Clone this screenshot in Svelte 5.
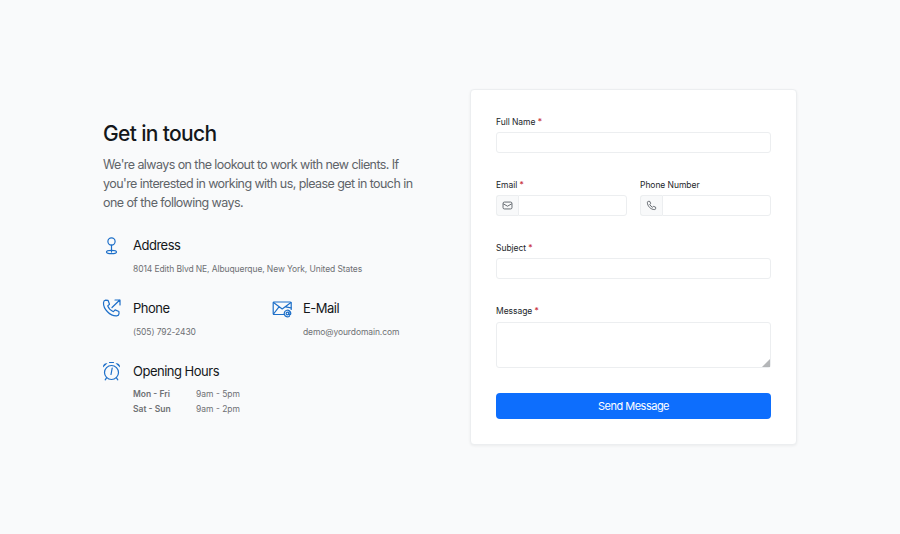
<script>
  const hours = [
    { day: 'Mon - Fri', time: '9am - 5pm' },
    { day: 'Sat - Sun', time: '9am - 2pm' }
  ];
</script>

<div class="page">
  <section class="intro">
    <h1>Get in touch</h1>
    <p class="lead">We're always on the lookout to work with new clients. If you're interested in working with us, please get in touch in one of the following ways.</p>

    <div class="info">
      <div class="item wide">
        <svg class="icon" viewBox="0 0 20 20" aria-hidden="true">
          <circle cx="9.500" cy="6.500" r="3.600" />
          <path d="M9.500 10.100v7" />
          <ellipse cx="9.500" cy="17" rx="5" ry="1.700" />
        </svg>
        <div>
          <h2>Address</h2>
          <p class="detail">8014 Edith Blvd NE, Albuquerque, New York, United States</p>
        </div>
      </div>

      <div class="item">
        <svg class="icon" viewBox="0 0 20 20" aria-hidden="true">
          <path d="M3.600 2.200 6 2.300 7.500 6.200 5.700 7.900c.9 2.500 2.900 4.700 5.700 5.800l1.700-1.800 3.800 1.600.1 2.300c-.1 1.300-1 2-2.300 2.100C8 18.300 1.200 10.900 1.500 4.700c.1-1.400 1-2.300 2.100-2.500Z" />
          <path d="M10 9.500 17.800 2M13 2h5v5" />
        </svg>
        <div>
          <h2>Phone</h2>
          <p class="detail">(505) 792-2430</p>
        </div>
      </div>

      <div class="item">
        <svg class="icon" viewBox="0 0 20 20" aria-hidden="true">
          <path d="M12 16.500H2.200a1 1 0 0 1-1-1V5a1 1 0 0 1 1-1h16a1 1 0 0 1 1 1v6.500" />
          <path d="M1.500 4.500 10.200 11 19 4.500M1.500 16 7 8.800M19 9.800 13.500 8.800" />
          <circle cx="15.500" cy="15.500" r="1.400" />
          <path d="M16.900 14v2.200c0 1 1.900 1 1.900-.7a3.300 3.300 0 1 0-1.400 2.700" />
        </svg>
        <div>
          <h2>E-Mail</h2>
          <p class="detail">demo@yourdomain.com</p>
        </div>
      </div>

      <div class="item wide">
        <svg class="icon" viewBox="0 0 20 20" aria-hidden="true">
          <circle cx="9.500" cy="11.500" r="7" />
          <path d="M10.200 7 9 13.500" />
          <path d="M4.500 16.800 3.200 18.800M14.500 16.800 15.800 18.800M7.500 1.500h4" />
          <path class="solid" d="M1 6.500C.6 3.800 2.700 1.800 5.500 2.300ZM18 6.500C18.400 3.800 16.300 1.800 13.500 2.300Z" />
        </svg>
        <div>
          <h2>Opening Hours</h2>
          <div class="hours">
            {#each hours as row}
              <div class="row"><strong>{row.day}</strong><span>{row.time}</span></div>
            {/each}
          </div>
        </div>
      </div>
    </div>
  </section>

  <form class="card">
    <div class="field">
      <label for="name">Full Name <em>*</em></label>
      <input id="name" type="text" />
    </div>

    <div class="split">
      <div class="field">
        <label for="email">Email <em>*</em></label>
        <div class="group">
          <span class="addon">
            <svg viewBox="0 0 16 16" aria-hidden="true">
              <rect x="1.500" y="3" width="13" height="10" rx="2" />
              <path d="M1.800 5.500 8 9l6.200-3.500" />
            </svg>
          </span>
          <input id="email" type="text" />
        </div>
      </div>
      <div class="field">
        <label for="phone">Phone Number</label>
        <div class="group">
          <span class="addon">
            <svg viewBox="0 0 16 16" aria-hidden="true">
              <path d="M3.500 2 5.500 2 6.800 5 5.400 6.300c.7 1.900 2.300 3.500 4.200 4.300l1.400-1.400 3 1.300v2c0 .8-.6 1.400-1.500 1.400C7 14 2 9 2 3.500 2 2.600 2.700 2 3.500 2Z" />
            </svg>
          </span>
          <input id="phone" type="text" />
        </div>
      </div>
    </div>

    <div class="field">
      <label for="subject">Subject <em>*</em></label>
      <input id="subject" type="text" />
    </div>

    <div class="field message">
      <label for="message">Message <em>*</em></label>
      <div class="area">
        <textarea id="message"></textarea>
        <svg class="grip" viewBox="0 0 8 8" aria-hidden="true">
          <path d="M8 0V8H0Z" />
        </svg>
      </div>
    </div>

    <button type="button">Send Message</button>
  </form>
</div>

<style>
  :global(body) {
    margin: 0;
    background: #f9fafb;
  }

  .page {
    box-sizing: border-box;
    height: 534px;
    padding: 0 103px;
    display: flex;
    align-items: center;
    justify-content: space-between;
    font-family: Inter, "Liberation Sans", sans-serif;
    color: #111418;
  }

  .intro {
    width: 327px;
    margin-bottom: 14px;
  }

  h1 {
    margin: 0;
    font-size: 21px;
    line-height: 26px;
    font-weight: 500;
    letter-spacing: -0.65px;
    color: #14171a;
  }

  .lead {
    margin: 8px 0 0;
    font-size: 12.500px;
    line-height: 19px;
    letter-spacing: -0.57px;
    color: #606469;
    width: 320px;
  }

  .info {
    margin-top: 24px;
    display: grid;
    grid-template-columns: 170px 1fr;
    row-gap: 25px;
  }

  .item {
    display: flex;
    gap: 11px;
    align-items: flex-start;
    height: 38px;
    margin-left: -1px;
  }

  .item.wide {
    grid-column: 1 / -1;
  }

  .icon {
    width: 20px;
    height: 20px;
    flex: none;
    fill: none;
    stroke: #1d6fc9;
    stroke-width: 1.200;
    stroke-linejoin: round;
    stroke-linecap: round;
    margin-top: -1px;
  }

  .icon .solid {
    fill: #1d6fc9;
    stroke: none;
  }

  h2 {
    margin: 0;
    font-size: 13px;
    line-height: 18px;
    font-weight: 400;
    letter-spacing: -0.5px;
    color: #14171a;
  }

  .detail {
    margin: 7px 0 0;
    font-size: 8.500px;
    line-height: 16px;
    letter-spacing: -0.1px;
    color: #6e7074;
    white-space: nowrap;
  }

  .hours {
    margin-top: 7px;
    font-size: 8.500px;
    line-height: 15px;
    color: #6e7074;
  }

  .row {
    display: flex;
  }

  .row strong {
    width: 63px;
    font-weight: 600;
  }

  .card {
    box-sizing: border-box;
    width: 327px;
    height: 356px;
    padding: 25px;
    background: #fff;
    border: 1px solid #eceef0;
    border-radius: 4px;
    box-shadow: 0 1px 3px rgba(0, 0, 0, 0.06);
    flex: none;
  }

  .field {
    height: 63px;
    min-width: 0;
  }

  .field.message {
    height: 89px;
  }

  .split {
    display: grid;
    grid-template-columns: 131px 131px;
    gap: 13px;
  }

  label {
    display: block;
    font-size: 8.500px;
    line-height: 14px;
    height: 17px;
    letter-spacing: -0.05px;
    color: #22262a;
  }

  label em {
    color: #c8323c;
    font-style: normal;
  }

  input,
  textarea {
    box-sizing: border-box;
    display: block;
    width: 100%;
    height: 21px;
    margin: 0;
    padding: 0 6px;
    border: 1px solid #eceef0;
    border-radius: 3px;
    background: #fff;
    outline: none;
  }

  .area {
    position: relative;
    padding-top: 1px;
  }

  textarea {
    height: 46px;
    resize: none;
  }

  .grip {
    position: absolute;
    right: 1px;
    bottom: 1px;
    width: 8px;
    height: 8px;
    fill: #b4b6b8;
  }

  .group {
    display: flex;
    height: 21px;
  }

  .group input {
    flex: 1;
    min-width: 0;
    border-radius: 0 3px 3px 0;
  }

  .addon {
    box-sizing: border-box;
    width: 22px;
    flex: none;
    display: flex;
    align-items: center;
    justify-content: center;
    background: #f8f9fa;
    border: 1px solid #eceef0;
    border-right: 0;
    border-radius: 3px 0 0 3px;
  }

  .addon svg {
    width: 11px;
    height: 11px;
    fill: none;
    stroke: #4a5058;
    stroke-width: 1.200;
    stroke-linejoin: round;
  }

  button {
    display: block;
    width: 100%;
    height: 26px;
    padding: 1px 0 0;
    border: 0;
    border-radius: 4px;
    background: #0d6efd;
    color: #fff;
    font: 400 11px/25px Inter, "Liberation Sans", sans-serif;
    letter-spacing: -0.5px;
  }
</style>
